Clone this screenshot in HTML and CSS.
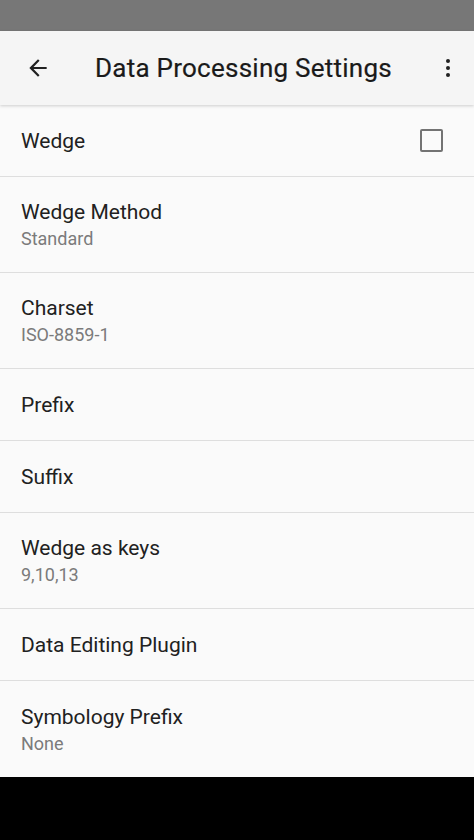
FILE: index.html
```html
<!DOCTYPE html>
<html>
<head>
<meta charset="utf-8">
<link rel="stylesheet" href="styles.css">
</head>
<body>
<div class="screen">
  <div class="status-bar"></div>
  <header class="toolbar">
    <div class="nav-btn">
      <svg width="24" height="24" viewBox="0 0 24 24"><path d="M20 11H7.83l5.59-5.59L12 4l-8 8 8 8 1.41-1.41L7.83 13H20v-2z" fill="#212121"/></svg>
    </div>
    <h1 class="title">Data Processing Settings</h1>
    <div class="menu-btn">
      <svg width="24" height="24" viewBox="0 0 24 24"><circle cx="12" cy="5" r="2" fill="#212121"/><circle cx="12" cy="12" r="2" fill="#212121"/><circle cx="12" cy="19" r="2" fill="#212121"/></svg>
    </div>
  </header>
  <main class="list">
    <div class="item single">
      <div class="texts"><div class="primary">Wedge</div></div>
      <div class="checkbox"></div>
    </div>
    <div class="item double">
      <div class="texts"><div class="primary">Wedge Method</div><div class="secondary">Standard</div></div>
    </div>
    <div class="item double">
      <div class="texts"><div class="primary">Charset</div><div class="secondary">ISO-8859-1</div></div>
    </div>
    <div class="item single">
      <div class="texts"><div class="primary">Prefix</div></div>
    </div>
    <div class="item single">
      <div class="texts"><div class="primary">Suffix</div></div>
    </div>
    <div class="item double">
      <div class="texts"><div class="primary">Wedge as keys</div><div class="secondary">9,10,13</div></div>
    </div>
    <div class="item single">
      <div class="texts"><div class="primary">Data Editing Plugin</div></div>
    </div>
    <div class="item double last">
      <div class="texts"><div class="primary">Symbology Prefix</div><div class="secondary">None</div></div>
    </div>
  </main>
  <div class="nav-bar"></div>
</div>
</body>
</html>
```

FILE: styles.css
```css
* { box-sizing: border-box; margin: 0; padding: 0; }
html, body { width: 474px; height: 840px; overflow: hidden; }
body { font-family: Roboto, "Noto Sans", sans-serif; background: #fafafa; }
.screen { display: flex; flex-direction: column; height: 840px; }
.status-bar { height: 31px; background: #777777; flex: none; }
.toolbar {
  height: 74px; flex: none; background: #f5f5f5;
  display: flex; align-items: center;
  box-shadow: 0 1px 3px rgba(0,0,0,0.18);
  position: relative; z-index: 1;
}
.nav-btn { width: 74px; padding-left: 25px; display: flex; align-items: center; }
.nav-btn svg { width: 26px; height: 26px; }
.title { font-size: 26px; font-weight: 400; color: #1a1a1a; margin-left: 21px; flex: 1; letter-spacing: 0.25px; -webkit-text-stroke: 0.2px #1a1a1a; }
.menu-btn { width: 48px; display: flex; justify-content: center; padding-right: 4px; }
.list { flex: 1; background: #fafafa; }
.item {
  display: flex; align-items: center; padding: 0 22px 0 21px;
  border-bottom: 1px solid #dedede;
}
.item.single { height: 72px; }
.item.double { height: 96px; }
.item.last { border-bottom: none; }
.texts { flex: 1; }
.primary { font-size: 21px; color: #212121; line-height: 26px; }
.secondary { font-size: 18px; color: #7b7b7b; line-height: 22px; margin-top: 3px; }
.checkbox { width: 23px; height: 23px; border: 2px solid #737373; border-radius: 2px; margin-right: 9px; }
.nav-bar { height: 64px; background: #000; flex: none; }
```
